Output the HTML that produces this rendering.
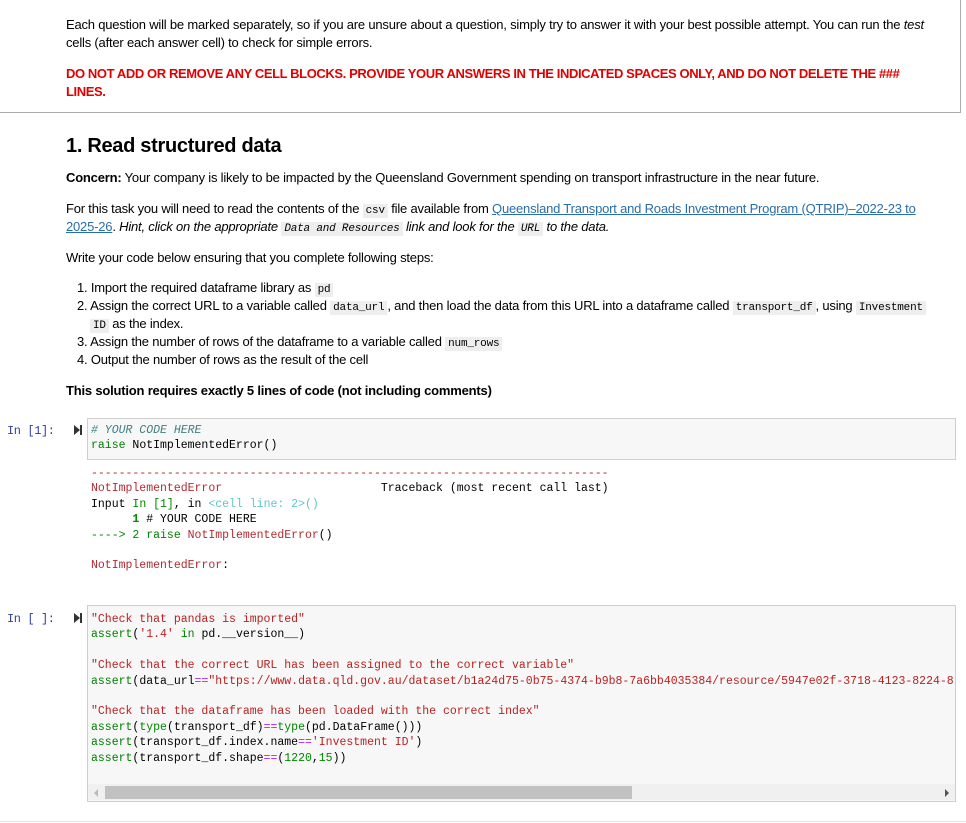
<!DOCTYPE html>
<html><head><meta charset="utf-8"><style>
*{margin:0;padding:0;box-sizing:border-box}
body{width:966px;height:823px;background:#fff;position:relative;overflow:hidden;font-family:"Liberation Sans",Arial,sans-serif;font-size:13px;color:#000;letter-spacing:-0.2px}
.a{position:absolute;white-space:nowrap}
.red{color:#e00000;font-weight:bold;letter-spacing:-0.4px}
code,.m{font-family:"Liberation Mono",monospace;font-size:11px;letter-spacing:-0.2px}
code{background:#eee;padding:1px 3px}
a{color:#296eaa;text-decoration:underline}
.box{position:absolute;border:1px solid #cfcfcf;background:#f7f7f7}
.pr{position:absolute;font-family:"Liberation Mono",monospace;font-size:12px;color:#303f9f;letter-spacing:-0.4px}
.code{position:absolute;font-family:"Liberation Mono",monospace;font-size:11.5px;line-height:15.4px;white-space:pre;letter-spacing:0;color:#000}
.k{color:#008000}.s{color:#ba2121}.c{color:#408080;font-style:italic}.o{color:#aa22ff}.n{color:#080}
.er{color:#b22b31}.g{color:#0c8}.cy{color:#60c6c8}
.arr{position:absolute;width:0;height:0;border-top:5px solid transparent;border-bottom:5px solid transparent;border-left:6px solid #333}
</style></head><body>
<div style="position:absolute;left:-2px;top:-2px;width:963px;height:115px;border:1px solid #ababab;border-top:none"></div>
<div class="a" style="left:66px;top:17px">Each question will be marked separately, so if you are unsure about a question, simply try to answer it with your best possible attempt. You can run the <i>test</i></div>
<div class="a" style="left:66px;top:35px">cells (after each answer cell) to check for simple errors.</div>
<div class="a red" style="left:66px;top:66px">DO NOT ADD OR REMOVE ANY CELL BLOCKS. PROVIDE YOUR ANSWERS IN THE INDICATED SPACES ONLY, AND DO NOT DELETE THE ###</div>
<div class="a red" style="left:66px;top:84px">LINES.</div>

<div class="a" style="left:66px;top:135px;font-size:20px;font-weight:bold;letter-spacing:-0.3px">1. Read structured data</div>
<div class="a" style="left:66px;top:170px"><b>Concern:</b> Your company is likely to be impacted by the Queensland Government spending on transport infrastructure in the near future.</div>
<div class="a" style="left:66px;top:201px">For this task you will need to read the contents of the <code>csv</code> file available from <a>Queensland Transport and Roads Investment Program (QTRIP)–2022-23 to</a></div>
<div class="a" style="left:66px;top:219px"><a>2025-26</a>. <i>Hint, click on the appropriate <code>Data and Resources</code> link and look for the <code>URL</code> to the data.</i></div>
<div class="a" style="left:66px;top:250px">Write your code below ensuring that you complete following steps:</div>
<div class="a" style="left:77px;top:280px">1. Import the required dataframe library as <code>pd</code></div>
<div class="a" style="left:77px;top:298px">2. Assign the correct URL to a variable called <code>data_url</code>, and then load the data from this URL into a dataframe called <code>transport_df</code>, using <code>Investment</code></div>
<div class="a" style="left:90px;top:316px"><code>ID</code> as the index.</div>
<div class="a" style="left:77px;top:334px">3. Assign the number of rows of the dataframe to a variable called <code>num_rows</code></div>
<div class="a" style="left:77px;top:352px">4. Output the number of rows as the result of the cell</div>
<div class="a" style="left:66px;top:383px;font-weight:bold">This solution requires exactly 5 lines of code (not including comments)</div>

<div class="pr" style="left:7px;top:424px">In [1]:</div>
<div class="arr" style="left:74px;top:425px"></div><div style="position:absolute;left:80px;top:425px;width:2px;height:10px;background:#333"></div>
<div class="box" style="left:87px;top:418px;width:869px;height:42px"></div>
<div class="code" style="left:91px;top:423px"><span class="c"># YOUR CODE HERE</span>
<span class="k">raise</span> NotImplementedError()</div>
<div class="code" style="left:91px;top:466px"><span class="er">---------------------------------------------------------------------------</span>
<span class="er">NotImplementedError</span>                       Traceback (most recent call last)
Input <span class="n">In [1]</span>, in <span class="cy">&lt;cell line: 2&gt;</span><span class="cy">()</span>
<span class="n" style="font-weight:bold">      1</span> # YOUR CODE HERE
<span class="n">----&gt; 2</span> <span class="k">raise</span> <span class="er">NotImplementedError</span>()

<span class="er">NotImplementedError</span>: </div>

<div class="pr" style="left:7px;top:612px">In [ ]:</div>
<div class="arr" style="left:74px;top:613px"></div><div style="position:absolute;left:80px;top:613px;width:2px;height:10px;background:#333"></div>
<div class="box" style="left:87px;top:605px;width:869px;height:197px;overflow:hidden">
<div class="code" style="left:3px;top:6px"><span class="s">"Check that pandas is imported"</span>
<span class="k">assert</span>(<span class="s">'1.4'</span> <span class="k">in</span> pd.__version__)

<span class="s">"Check that the correct URL has been assigned to the correct variable"</span>
<span class="k">assert</span>(data_url<span class="o">==</span><span class="s">"https://www.data.qld.gov.au/dataset/b1a24d75-0b75-4374-b9b8-7a6bb4035384/resource/5947e02f-3718-4123-8224-8</span>

<span class="s">"Check that the dataframe has been loaded with the correct index"</span>
<span class="k">assert</span>(<span class="n">type</span>(transport_df)<span class="o">==</span><span class="n">type</span>(pd.DataFrame()))
<span class="k">assert</span>(transport_df.index.name<span class="o">==</span><span class="s">'Investment ID'</span>)
<span class="k">assert</span>(transport_df.shape<span class="o">==</span>(<span class="n">1220</span>,<span class="n">15</span>))</div>
<div style="position:absolute;left:0;top:178px;width:867px;height:16px;background:#f0f0f0"></div>
<div style="position:absolute;left:17px;top:180px;width:527px;height:13px;background:#c1c1c1"></div>
<div style="position:absolute;left:6px;top:183px;width:0;height:0;border-top:4px solid transparent;border-bottom:4px solid transparent;border-right:4px solid #bbb"></div>
<div style="position:absolute;left:857px;top:183px;width:0;height:0;border-top:4px solid transparent;border-bottom:4px solid transparent;border-left:4px solid #555"></div>
</div>
<div style="position:absolute;left:0;top:821px;width:966px;height:1px;background:#e4e4e4"></div>
</body></html>
